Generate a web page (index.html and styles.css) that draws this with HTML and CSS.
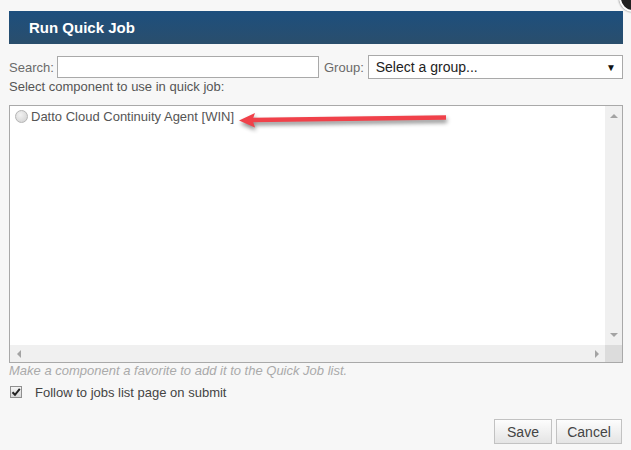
FILE: index.html
```html
<!DOCTYPE html>
<html>
<head>
<meta charset="utf-8">
<link rel="stylesheet" href="styles.css">
</head>
<body>
<div class="close"></div>
<div class="dialog">
  <div class="header">Run Quick Job</div>
  <div class="filters">
    <span class="lbl">Search:</span>
    <span class="search"></span>
    <span class="lbl group-lbl">Group:</span>
    <span class="select"><span>Select a group...</span><span class="caret">&#9660;</span></span>
  </div>
  <div class="instr">Select component to use in quick job:</div>
  <div class="listbox">
    <div class="list-content">
      <div class="item"><span class="radio"></span><span>Datto Cloud Continuity Agent [WIN]</span></div>
      <svg class="arrow" width="220" height="28" viewBox="0 0 220 28">
        <line x1="18" y1="14" x2="212" y2="11.5" stroke="#f0414a" stroke-width="4.5"/>
        <polygon points="5,14.5 21,7 18.5,14 21,21.5" fill="#f0414a"/>
      </svg>
    </div>
    <div class="vbar"><span class="tri up"></span><span class="tri down"></span></div>
    <div class="hbar"><span class="tri left"></span><span class="tri right"></span></div>
    <div class="corner"></div>
  </div>
  <div class="hint">Make a component a favorite to add it to the Quick Job list.</div>
  <div class="follow">
    <span class="check"><svg width="10" height="10" viewBox="0 0 10 10"><path d="M1.5 5.2 L4 7.8 L8.8 1.8" fill="none" stroke="#222" stroke-width="2"/></svg></span>
    <span>Follow to jobs list page on submit</span>
  </div>
  <div class="actions">
    <span class="btn save">Save</span>
    <span class="btn cancel">Cancel</span>
  </div>
</div>
</body>
</html>
```
FILE: styles.css
```css
html, body {
  margin: 0;
  padding: 0;
  background: #f7f7f7;
  font-family: "Liberation Sans", Arial, sans-serif;
  font-size: 13px;
  color: #555;
  overflow: hidden;
}
.close {
  position: absolute;
  left: 619px;
  top: -16px;
  width: 24px;
  height: 24px;
  border-radius: 50%;
  background: #222;
  border: 2px solid #fff;
  box-shadow: 0 0 2px #666;
}
.dialog {
  width: 614px;
  padding: 11px 0 0 9px;
}
.header {
  height: 33px;
  background: linear-gradient(#1d4f7e, #2a4e6c);
  color: #fff;
  font-weight: bold;
  font-size: 15px;
  padding-left: 20px;
  display: flex;
  align-items: center;
}
.filters {
  display: flex;
  align-items: center;
  margin-top: 11px;
  height: 24px;
}
.lbl {
  color: #6a6a6a;
  margin-right: 3px;
}
.search {
  width: 263px;
  height: 22px;
  box-sizing: border-box;
  border: 1px solid #a9a9a9;
  background: #fff;
}
.group-lbl {
  margin-left: 5px;
  margin-right: 4px;
}
.select {
  width: 256px;
  height: 24px;
  box-sizing: border-box;
  border: 1px solid #a9a9a9;
  background: #fff;
  display: flex;
  align-items: center;
  justify-content: space-between;
  padding: 0 6px 0 7px;
  color: #222;
  font-size: 14px;
}
.caret {
  font-size: 10px;
  color: #111;
}
.instr {
  line-height: 16px;
  color: #555;
}
.listbox {
  margin-top: 10px;
  height: 258px;
  box-sizing: border-box;
  border: 1px solid #a9a9a9;
  background: #fff;
  display: grid;
  grid-template-columns: 1fr 17px;
  grid-template-rows: 1fr 17px;
}
.list-content {
  position: relative;
}
.item {
  display: flex;
  align-items: center;
  gap: 3px;
  padding: 4px 0 0 5px;
  line-height: 13px;
  color: #555;
}
.radio {
  width: 11px;
  height: 11px;
  border-radius: 50%;
  border: 1px solid #b5b5b5;
  background: radial-gradient(circle at 40% 35%, #f2f2f2, #cfcfcf);
}
.arrow {
  position: absolute;
  left: 224px;
  top: 0;
  filter: drop-shadow(1px 3px 2px rgba(0, 0, 0, 0.45));
}
.vbar {
  background: #f0f0f0;
  display: flex;
  flex-direction: column;
  justify-content: space-between;
  align-items: center;
  padding: 8px 0;
}
.hbar {
  background: #f0f0f0;
  display: flex;
  justify-content: space-between;
  align-items: center;
  padding: 0 6px 0 7px;
}
.corner {
  background: #dcdcdc;
}
.tri {
  width: 0;
  height: 0;
}
.up {
  border-left: 4px solid transparent;
  border-right: 4px solid transparent;
  border-bottom: 4px solid #a3a3a3;
}
.down {
  border-left: 4px solid transparent;
  border-right: 4px solid transparent;
  border-top: 4px solid #a3a3a3;
}
.left {
  border-top: 4px solid transparent;
  border-bottom: 4px solid transparent;
  border-right: 4px solid #a3a3a3;
}
.right {
  border-top: 4px solid transparent;
  border-bottom: 4px solid transparent;
  border-left: 4px solid #a3a3a3;
}
.hint {
  line-height: 16px;
  color: #aaa;
  font-style: italic;
}
.follow {
  display: flex;
  align-items: center;
  gap: 13px;
  margin-top: 5px;
  height: 16px;
  padding-left: 1px;
  color: #444;
}
.check {
  width: 12px;
  height: 12px;
  box-sizing: border-box;
  border: 1px solid #8f8f8f;
  background: linear-gradient(#f4f4f4, #d8d8d8);
  display: flex;
  align-items: center;
  justify-content: center;
}
.actions {
  display: flex;
  justify-content: flex-end;
  gap: 4px;
  margin-top: 19px;
  padding-right: 1px;
}
.btn {
  height: 25px;
  box-sizing: border-box;
  border: 1px solid #c2c2c2;
  background: linear-gradient(#fdfdfd, #e4e4e4);
  color: #444;
  font-size: 14px;
  display: flex;
  align-items: center;
  justify-content: center;
}
.save { width: 58px; }
.cancel { width: 66px; }
```
